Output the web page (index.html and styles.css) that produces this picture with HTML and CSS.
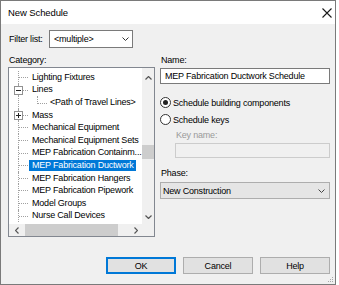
FILE: index.html
```html
<!DOCTYPE html>
<html>
<head>
<meta charset="utf-8">
<link rel="stylesheet" href="styles.css">
</head>
<body>
<div class="window">
  <div class="titlebar">
    <span class="title">New Schedule</span>
    <svg class="close" width="10" height="10" viewBox="0 0 10 10"><path d="M0.5 0.5 L9.5 9.5 M9.5 0.5 L0.5 9.5" stroke="#1a1a1a" stroke-width="1.1" fill="none"/></svg>
  </div>
  <div class="content">
    <div class="filter-row">
      <span class="filter-lbl">Filter list:</span>
      <div class="combo filter-combo">
        <span>&lt;multiple&gt;</span>
        <svg width="7" height="4" viewBox="0 0 7 4"><path d="M0.5 0.5 L3.5 3.5 L6.5 0.5" stroke="#333" stroke-width="1" fill="none"/></svg>
      </div>
    </div>
    <div class="columns">
      <div class="left">
        <div class="lbl">Category:</div>
        <div class="listbox">
          <div class="tree">
            <div class="row"><span class="branch"></span><span class="item">Lighting Fixtures</span></div>
            <div class="row"><span class="branch"><span class="exp minus"></span></span><span class="item">Lines</span></div>
            <div class="row"><span class="branch child"></span><span class="item">&lt;Path of Travel Lines&gt;</span></div>
            <div class="row"><span class="branch"><span class="exp plus"></span></span><span class="item">Mass</span></div>
            <div class="row"><span class="branch"></span><span class="item">Mechanical Equipment</span></div>
            <div class="row"><span class="branch"></span><span class="item">Mechanical Equipment Sets</span></div>
            <div class="row"><span class="branch"></span><span class="item">MEP Fabrication Containm...</span></div>
            <div class="row"><span class="branch"></span><span class="item selected">MEP Fabrication Ductwork</span></div>
            <div class="row"><span class="branch"></span><span class="item">MEP Fabrication Hangers</span></div>
            <div class="row"><span class="branch"></span><span class="item">MEP Fabrication Pipework</span></div>
            <div class="row"><span class="branch"></span><span class="item">Model Groups</span></div>
            <div class="row"><span class="branch"></span><span class="item">Nurse Call Devices</span></div>
          </div>
          <div class="vscroll">
            <div class="arrow v-up"><svg width="7" height="4" viewBox="0 0 7 4"><path d="M0.5 3.5 L3.5 0.5 L6.5 3.5" stroke="#555" stroke-width="1.2" fill="none"/></svg></div>
            <div class="vtrack"><div class="vthumb"></div></div>
            <div class="arrow v-down"><svg width="7" height="4" viewBox="0 0 7 4"><path d="M0.5 0.5 L3.5 3.5 L6.5 0.5" stroke="#555" stroke-width="1.2" fill="none"/></svg></div>
          </div>
          <div class="hscroll">
            <div class="arrow h-left"><svg width="4" height="7" viewBox="0 0 4 7"><path d="M3.5 0.5 L0.5 3.5 L3.5 6.5" stroke="#555" stroke-width="1.2" fill="none"/></svg></div>
            <div class="htrack"><div class="hthumb"></div></div>
            <div class="arrow h-right"><svg width="4" height="7" viewBox="0 0 4 7"><path d="M0.5 0.5 L3.5 3.5 L0.5 6.5" stroke="#555" stroke-width="1.2" fill="none"/></svg></div>
          </div>
          <div class="corner"></div>
        </div>
      </div>
      <div class="right">
        <div class="lbl">Name:</div>
        <div class="textbox name-box">MEP Fabrication Ductwork Schedule</div>
        <label class="radio-row first"><span class="radio checked"></span><span>Schedule building components</span></label>
        <label class="radio-row"><span class="radio"></span><span>Schedule keys</span></label>
        <div class="lbl key-lbl">Key name:</div>
        <div class="textbox key-box"></div>
        <div class="lbl phase-lbl">Phase:</div>
        <div class="combo phase-combo">
          <span>New Construction</span>
          <svg width="7" height="4" viewBox="0 0 7 4"><path d="M0.5 0.5 L3.5 3.5 L6.5 0.5" stroke="#444" stroke-width="1" fill="none"/></svg>
        </div>
      </div>
    </div>
    <div class="buttons">
      <div class="btn default">OK</div>
      <div class="btn">Cancel</div>
      <div class="btn">Help</div>
    </div>
  </div>
  <svg class="grip" width="6" height="6" viewBox="0 0 6 6">
    <rect x="4" y="0" width="1" height="1" fill="#a8a8a8"/>
    <rect x="2" y="2" width="1" height="1" fill="#a8a8a8"/>
    <rect x="4" y="2" width="1" height="1" fill="#a8a8a8"/>
    <rect x="0" y="4" width="1" height="1" fill="#a8a8a8"/>
    <rect x="2" y="4" width="1" height="1" fill="#a8a8a8"/>
    <rect x="4" y="4" width="1" height="1" fill="#a8a8a8"/>
  </svg>
</div>
</body>
</html>
```

FILE: styles.css
```css
* { box-sizing: border-box; margin: 0; padding: 0; }
html, body { background: #ffffff; }
body {
  margin: 0;
  font-family: "Liberation Sans", Arial, sans-serif;
  font-size: 9px;
  letter-spacing: -0.2px;
  color: #000;
}
.window {
  position: relative;
  width: 336px;
  height: 285px;
  border: 1px solid #7a7a7a;
  background: #f0f0f0;
  display: flex;
  flex-direction: column;
}
.titlebar {
  height: 23px;
  flex: none;
  background: #ffffff;
  display: flex;
  align-items: center;
  justify-content: space-between;
  padding: 0 3px 0 7px;
}
.title { font-size: 9.5px; letter-spacing: -0.1px; }
.close { display: block; }

.content {
  flex: 1;
  display: flex;
  flex-direction: column;
  padding: 6px 4px 10px 7px;
}
.filter-row {
  height: 18px;
  display: flex;
  align-items: center;
}
.filter-lbl { width: 41px; padding-left: 1px; }
.combo {
  display: flex;
  align-items: center;
  justify-content: space-between;
}
.combo svg { display: block; }
.filter-combo {
  width: 84px;
  height: 18px;
  background: #fff;
  border: 1px solid #7a7a7a;
  padding: 0 3px 0 4px;
}

.columns {
  margin-top: 7px;
  display: flex;
  gap: 5px;
}
.left { width: 147px; }
.right { width: 170px; }
.lbl { height: 11px; line-height: 11px; padding-left: 1px; }
.left .lbl { margin-bottom: 1px; }

.listbox {
  height: 170px;
  border: 1px solid #828790;
  display: grid;
  grid-template-columns: 1fr 12px;
  grid-template-rows: 1fr 12px;
  background: #fff;
}
.tree {
  overflow: hidden;
  padding-top: 3px;
  background: #fff;
}
.row {
  height: 12.6px;
  display: flex;
  align-items: center;
  white-space: nowrap;
}
.branch {
  position: relative;
  width: 20px;
  align-self: stretch;
  flex: none;
}
.branch::before {
  content: "";
  position: absolute;
  left: 9px;
  top: 0;
  bottom: 0;
  border-left: 1px dotted #a0a0a0;
}
.branch::after {
  content: "";
  position: absolute;
  left: 10px;
  right: 1px;
  top: 6px;
  border-top: 1px dotted #a0a0a0;
}
.branch.child { width: 38px; }
.branch.child::after {
  left: 28px;
  right: auto;
  width: 9px;
  top: 0;
  height: 7px;
  border-top: none;
  border-left: 1px dotted #a0a0a0;
  border-bottom: 1px dotted #a0a0a0;
}
.exp {
  position: absolute;
  left: 5px;
  top: 2px;
  width: 9px;
  height: 9px;
  border: 1px solid #919191;
  background: #fff;
  z-index: 1;
}
.exp::before {
  content: "";
  position: absolute;
  left: 1px;
  top: 3px;
  width: 5px;
  height: 1px;
  background: #222;
}
.exp.plus::after {
  content: "";
  position: absolute;
  left: 3px;
  top: 1px;
  width: 1px;
  height: 5px;
  background: #222;
}
.item {
  height: 11px;
  line-height: 11px;
  padding: 0 2px 0 3px;
}
.item.selected {
  background: #0078d7;
  color: #fff;
}

.vscroll {
  background: #f0f0f0;
  display: flex;
  flex-direction: column;
}
.arrow {
  display: flex;
  align-items: center;
  justify-content: center;
  flex: none;
}
.arrow svg { display: block; }
.v-up { height: 19px; }
.v-down { height: 14px; }
.vtrack { flex: 1; }
.vthumb {
  margin-top: 58px;
  height: 14px;
  background: #cdcdcd;
}
.hscroll {
  background: #f0f0f0;
  display: flex;
}
.h-left { width: 15px; }
.h-right { width: 13px; }
.htrack { flex: 1; }
.hthumb {
  margin-left: 1px;
  width: 93px;
  height: 100%;
  background: #cdcdcd;
}
.corner { background: #f0f0f0; }

.textbox {
  border: 1px solid #7a7a7a;
  background: #fff;
}
.name-box {
  margin-top: 2px;
  height: 16px;
  line-height: 14px;
  padding-left: 4px;
}
.radio-row {
  display: flex;
  align-items: center;
  height: 13px;
  margin-top: 4px;
}
.radio-row.first { margin-top: 12px; }
.radio {
  width: 11px;
  height: 11px;
  border: 1px solid #333;
  border-radius: 50%;
  background: #fff;
  margin-right: 2px;
  position: relative;
  flex: none;
}
.radio.checked::after {
  content: "";
  position: absolute;
  left: 2px;
  top: 2px;
  width: 5px;
  height: 5px;
  border-radius: 50%;
  background: #222;
}
.key-lbl {
  margin-top: 4px;
  padding-left: 16px;
  color: #9a9a9a;
}
.key-box {
  margin-top: 2px;
  margin-left: 15px;
  height: 15px;
  border-color: #cccccc;
  background: #f0f0f0;
}
.phase-lbl { margin-top: 10px; }
.phase-combo {
  margin-top: 3px;
  height: 17px;
  background: #e5e5e5;
  border: 1px solid #adadad;
  padding: 0 4px 0 2px;
}

.buttons {
  margin-top: auto;
  display: flex;
  justify-content: flex-end;
  gap: 7px;
  padding-right: 1px;
}
.btn {
  width: 70px;
  height: 17px;
  background: #e1e1e1;
  border: 1px solid #adadad;
  display: flex;
  align-items: center;
  justify-content: center;
}
.btn.default {
  border-color: #0078d7;
  box-shadow: inset 0 0 0 1px #0078d7;
}
.grip {
  position: absolute;
  right: 1px;
  bottom: 1px;
  display: block;
}
```
